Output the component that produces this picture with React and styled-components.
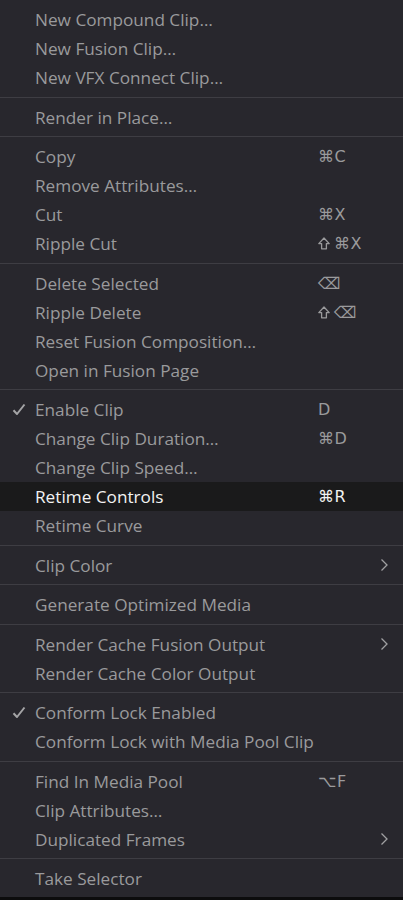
import styled, { createGlobalStyle } from "styled-components";

const GlobalStyle = createGlobalStyle`
  html, body {
    margin: 0;
    padding: 0;
    background: #0c0c0d;
  }
`;

const Menu = styled.div`
  width: 403px;
  height: 897px;
  box-sizing: border-box;
  padding-top: 5px;
  background-color: #28272d;
  font-family: "Open Sans", "DejaVu Sans", sans-serif;
  font-size: 17.2px;
  color: #9a9a9c;
  display: flex;
  flex-direction: column;
`;

const Row = styled.div`
  height: 29px;
  flex: none;
  display: grid;
  grid-template-columns: 35px 1fr 62px 23px;
  align-items: center;
  background-color: ${({ active }) => (active ? "#1a1a1b" : "transparent")};
  color: ${({ active }) => (active ? "#f2f2f2" : "inherit")};
  white-space: nowrap;
`;

const Check = styled.span`
  display: flex;
  justify-content: center;
  padding-left: 2px;
`;

const Label = styled.span`
  line-height: 29px;
`;

const Shortcut = styled.span`
  display: flex;
  align-items: center;
  gap: 4px;
  font-family: "DejaVu Sans", "Open Sans", sans-serif;
  font-size: 16px;
  letter-spacing: 0.5px;
`;

const Arrow = styled.span`
  display: flex;
  align-items: center;
`;

const Separator = styled.div`
  height: 10.5px;
  flex: none;
  display: flex;
  align-items: center;
  &::after {
    content: "";
    display: block;
    width: 100%;
    height: 1px;
    background-color: #3e3d43;
  }
`;

const Chevron = () => (
  <svg width="9" height="14" viewBox="0 0 9 14">
    <path d="M1.5 1.5 L7 7 L1.5 12.5" fill="none" stroke="#a0a0a2" strokeWidth="1.3" />
  </svg>
);

const CheckMark = () => (
  <svg width="14" height="13" viewBox="0 0 14 13">
    <path d="M1.5 7.2 L5 11 L12.5 1.5" fill="none" stroke="#a4a4a6" strokeWidth="2" strokeLinejoin="round" />
  </svg>
);

const ShiftIcon = () => (
  <svg width="12" height="13" viewBox="0 0 12 13">
    <path
      d="M6 1 L11.2 6.6 L8.4 6.6 L8.4 11.8 L3.6 11.8 L3.6 6.6 L0.8 6.6 Z"
      fill="none"
      stroke="currentColor"
      strokeWidth="1.3"
      strokeLinejoin="round"
    />
  </svg>
);

const groups = [
  [
    { label: "New Compound Clip..." },
    { label: "New Fusion Clip..." },
    { label: "New VFX Connect Clip..." },
  ],
  [{ label: "Render in Place..." }],
  [
    { label: "Copy", key: "⌘C" },
    { label: "Remove Attributes..." },
    { label: "Cut", key: "⌘X" },
    { label: "Ripple Cut", key: "⌘X", shift: true },
  ],
  [
    { label: "Delete Selected", key: "⌫" },
    { label: "Ripple Delete", key: "⌫", shift: true },
    { label: "Reset Fusion Composition..." },
    { label: "Open in Fusion Page" },
  ],
  [
    { label: "Enable Clip", key: "D", checked: true },
    { label: "Change Clip Duration...", key: "⌘D" },
    { label: "Change Clip Speed..." },
    { label: "Retime Controls", key: "⌘R", active: true },
    { label: "Retime Curve" },
  ],
  [{ label: "Clip Color", sub: true }],
  [{ label: "Generate Optimized Media" }],
  [
    { label: "Render Cache Fusion Output", sub: true },
    { label: "Render Cache Color Output" },
  ],
  [
    { label: "Conform Lock Enabled", checked: true },
    { label: "Conform Lock with Media Pool Clip" },
  ],
  [
    { label: "Find In Media Pool", key: "⌥F" },
    { label: "Clip Attributes..." },
    { label: "Duplicated Frames", sub: true },
  ],
  [{ label: "Take Selector" }],
];

export default function App() {
  return (
    <>
      <GlobalStyle />
      <Menu>
        {groups.map((items, g) => (
          <div key={g} style={{ display: "contents" }}>
            {g > 0 && <Separator />}
            {items.map((item) => (
              <Row key={item.label} active={item.active}>
                <Check>{item.checked && <CheckMark />}</Check>
                <Label>{item.label.replace("...", "…")}</Label>
                <Shortcut>
                  {item.shift && <ShiftIcon />}
                  <span>{item.key}</span>
                </Shortcut>
                <Arrow>{item.sub && <Chevron />}</Arrow>
              </Row>
            ))}
          </div>
        ))}
      </Menu>
    </>
  );
}
